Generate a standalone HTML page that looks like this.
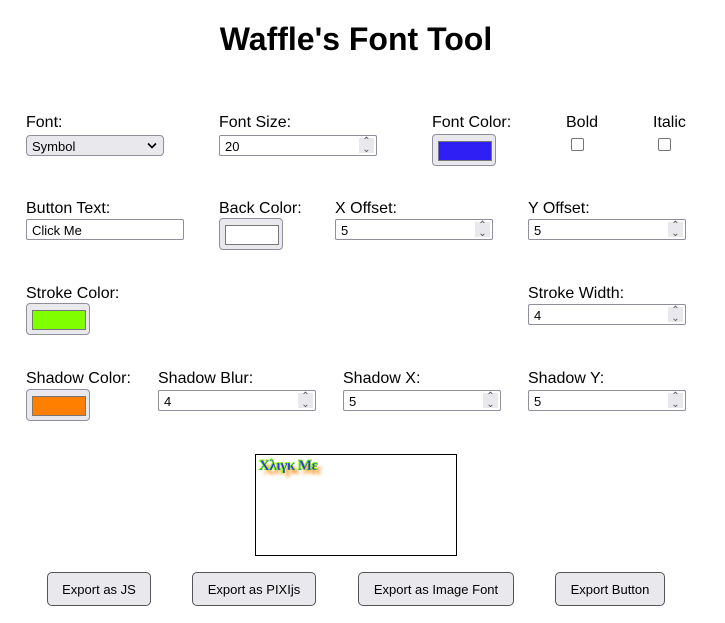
<!DOCTYPE html>
<html><head><style>
body{margin:0;width:725px;height:623px;background:#fff;font-family:"Liberation Sans",sans-serif;position:relative;overflow:hidden}
.a{position:absolute}
h1{position:absolute;left:0;width:712px;text-align:center;top:21px;margin:0;font-size:32px;font-weight:bold;color:#000}
.l{position:absolute;font-size:16px;color:#000;line-height:18px;margin-top:1px}
.i{position:absolute;height:21px;box-sizing:border-box;border:1px solid #8f8f9d;border-radius:2px;background:#fff;font-size:13px;padding:3px 0 0 5px;color:#000}
.sp{position:absolute;right:2px;top:2px;width:15px;height:15px;background:#e9e9ed;font-size:10px;line-height:8px;text-align:center;color:#555}
.c{position:absolute;width:64px;height:32px;box-sizing:border-box;border:1px solid #8f8f9d;border-radius:4px;background:#e9e9ed}
.c div{position:absolute;left:5px;top:6px;width:52px;height:18px;border:1px solid #777}
.cb{position:absolute;width:11px;height:11px;border:1px solid #767676;border-radius:2px;background:#fff}
.b{position:absolute;top:572px;height:34px;box-sizing:border-box;border:1px solid #555;border-radius:5px;background:#e9e9ed;font-size:13px;text-align:center;line-height:34px;color:#000}
</style></head><body>
<h1>Waffle's Font Tool</h1>
<div class="l" style="left:26px;top:113px">Font:</div>
<div class="i" style="left:26px;top:135px;width:138px;background:#e9e9ed;border-radius:4px">Symbol<svg style="position:absolute;right:6px;top:6px" width="10" height="7" viewBox="0 0 10 7"><path d="M1 1.5L5 5.5L9 1.5" fill="none" stroke="#000" stroke-width="1.6"/></svg></div>
<div class="l" style="left:219px;top:113px">Font Size:</div>
<div class="i" style="left:219px;top:135px;width:158px">20<div class="sp">⌃<br>⌄</div></div>
<div class="l" style="left:432px;top:113px">Font Color:</div>
<div class="c" style="left:432px;top:134px"><div style="background:#2f1ff5"></div></div>
<div class="l" style="left:566px;top:113px">Bold</div>
<div class="cb" style="left:571px;top:138px"></div>
<div class="l" style="left:653px;top:113px">Italic</div>
<div class="cb" style="left:658px;top:138px"></div>

<div class="l" style="left:26px;top:199px">Button Text:</div>
<div class="i" style="left:26px;top:219px;width:158px">Click Me</div>
<div class="l" style="left:219px;top:199px">Back Color:</div>
<div class="c" style="left:219px;top:218px"><div style="background:#fff"></div></div>
<div class="l" style="left:335px;top:199px">X Offset:</div>
<div class="i" style="left:335px;top:219px;width:158px">5<div class="sp">⌃<br>⌄</div></div>
<div class="l" style="left:528px;top:199px">Y Offset:</div>
<div class="i" style="left:528px;top:219px;width:158px">5<div class="sp">⌃<br>⌄</div></div>

<div class="l" style="left:26px;top:284px">Stroke Color:</div>
<div class="c" style="left:26px;top:303px"><div style="background:#80ff00"></div></div>
<div class="l" style="left:528px;top:284px">Stroke Width:</div>
<div class="i" style="left:528px;top:304px;width:158px">4<div class="sp">⌃<br>⌄</div></div>

<div class="l" style="left:26px;top:369px">Shadow Color:</div>
<div class="c" style="left:26px;top:389px"><div style="background:#ff8000"></div></div>
<div class="l" style="left:158px;top:369px">Shadow Blur:</div>
<div class="i" style="left:158px;top:390px;width:158px">4<div class="sp">⌃<br>⌄</div></div>
<div class="l" style="left:343px;top:369px">Shadow X:</div>
<div class="i" style="left:343px;top:390px;width:158px">5<div class="sp">⌃<br>⌄</div></div>
<div class="l" style="left:528px;top:369px">Shadow Y:</div>
<div class="i" style="left:528px;top:390px;width:158px">5<div class="sp">⌃<br>⌄</div></div>

<div class="a" style="left:255px;top:454px;width:200px;height:100px;border:1px solid #000">
<div class="a" style="left:3px;top:3px;font-family:'Liberation Serif',serif;font-size:15px;color:#3030f0;-webkit-text-stroke:0.3px #80ff00;text-shadow:-1px 0 #80ff00,0 -1px #80ff00,4px 4px 3px #ff8000;font-weight:bold;letter-spacing:-0.5px">Χλιγκ Με</div>
</div>

<div class="b" style="left:47px;width:104px">Export as JS</div>
<div class="b" style="left:192px;width:124px">Export as PIXIjs</div>
<div class="b" style="left:358px;width:156px">Export as Image Font</div>
<div class="b" style="left:555px;width:110px">Export Button</div>
</body></html>
